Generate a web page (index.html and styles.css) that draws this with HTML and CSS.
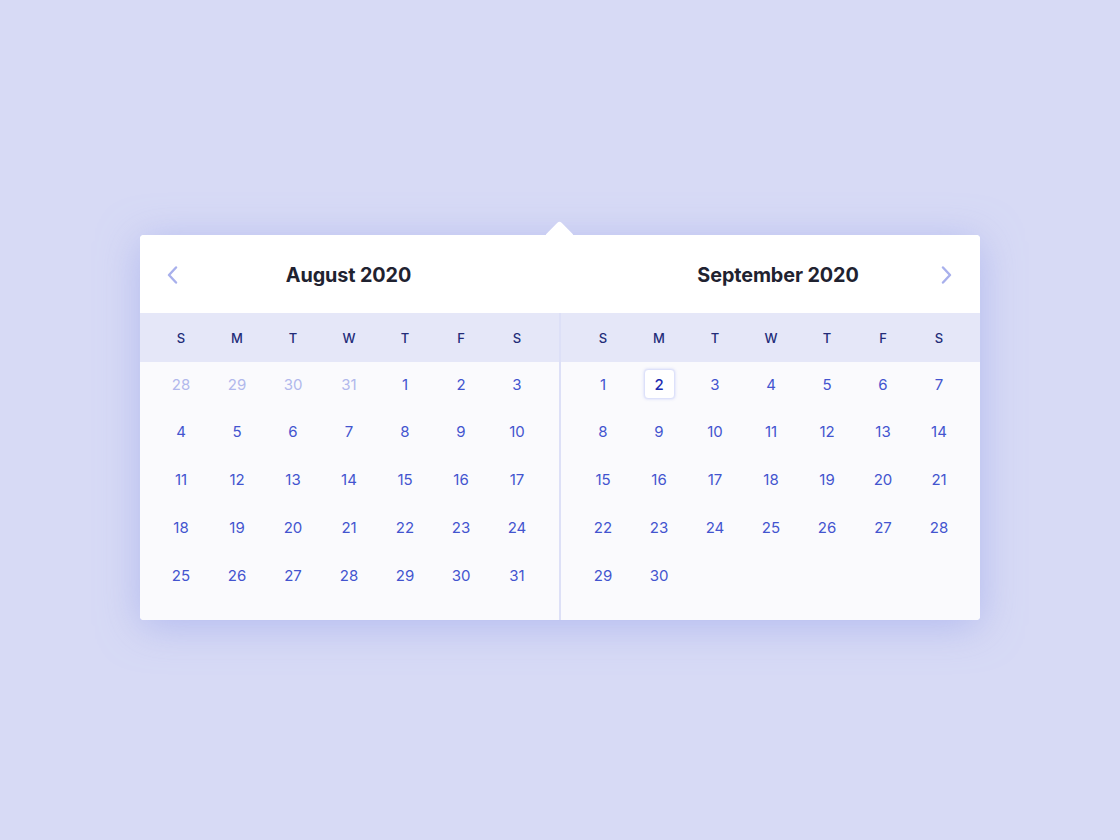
FILE: index.html
```
<!DOCTYPE html>
<html lang="en">
<head>
    <meta charset="UTF-8">
    <title>Date Range Picker</title>
    <link rel="stylesheet" href="styles.css">
</head>
<body>

<div class="picker">
    <div class="months">
        <section class="month month-left">
            <header class="month-head">
                <button class="nav" type="button" aria-label="Previous month">
                    <svg width="12" height="18" viewBox="0 0 12 18"><path d="M10 1.5 L3 9 L10 16.5" fill="none" stroke="currentColor" stroke-width="2.4" stroke-linecap="round" stroke-linejoin="round"/></svg>
                </button>
                <h2 class="month-title">August 2020</h2>
                <span class="spacer"></span>
            </header>
            <div class="weekdays">
                <span>S</span><span>M</span><span>T</span><span>W</span><span>T</span><span>F</span><span>S</span>
            </div>
            <div class="days">
                <span class="muted">28</span><span class="muted">29</span><span class="muted">30</span><span class="muted">31</span><span>1</span><span>2</span><span>3</span>
                <span>4</span><span>5</span><span>6</span><span>7</span><span>8</span><span>9</span><span>10</span>
                <span>11</span><span>12</span><span>13</span><span>14</span><span>15</span><span>16</span><span>17</span>
                <span>18</span><span>19</span><span>20</span><span>21</span><span>22</span><span>23</span><span>24</span>
                <span>25</span><span>26</span><span>27</span><span>28</span><span>29</span><span>30</span><span>31</span>
            </div>
        </section>

        <section class="month month-right">
            <header class="month-head">
                <span class="spacer"></span>
                <h2 class="month-title">September 2020</h2>
                <button class="nav" type="button" aria-label="Next month">
                    <svg width="12" height="18" viewBox="0 0 12 18"><path d="M2 1.5 L9 9 L2 16.5" fill="none" stroke="currentColor" stroke-width="2.4" stroke-linecap="round" stroke-linejoin="round"/></svg>
                </button>
            </header>
            <div class="weekdays">
                <span>S</span><span>M</span><span>T</span><span>W</span><span>T</span><span>F</span><span>S</span>
            </div>
            <div class="days">
                <span>1</span><span class="today">2</span><span>3</span><span>4</span><span>5</span><span>6</span><span>7</span>
                <span>8</span><span>9</span><span>10</span><span>11</span><span>12</span><span>13</span><span>14</span>
                <span>15</span><span>16</span><span>17</span><span>18</span><span>19</span><span>20</span><span>21</span>
                <span>22</span><span>23</span><span>24</span><span>25</span><span>26</span><span>27</span><span>28</span>
                <span>29</span><span>30</span>
            </div>
        </section>
    </div>
</div>

</body>
</html>
```

FILE: styles.css
```
* {
    margin: 0;
    padding: 0;
    box-sizing: border-box;
}

body {
    font-family: 'Inter', 'Liberation Sans', sans-serif;
    background-color: #d7daf5;
    display: flex;
    justify-content: center;
    align-items: flex-start;
    padding-top: 235px;
    min-height: 100vh;
}

.picker {
    position: relative;
    width: 840px;
    border-radius: 4px;
    background-color: #fff;
    box-shadow: 0 6px 40px rgba(150, 160, 235, 0.55);
}

/* little pointer on top of the popover */
.picker::before {
    content: '';
    position: absolute;
    top: -10px;
    left: 409px;
    width: 21px;
    height: 21px;
    background-color: #fff;
    border-radius: 3px;
    transform: rotate(45deg);
}

.months {
    position: relative;
    display: grid;
    grid-template-columns: 419px 421px;
    border-radius: 4px;
    overflow: hidden;
}

.month-head {
    height: 78px;
    display: flex;
    align-items: center;
    padding-top: 1px;
    background-color: #fff;
}

.month-left .month-head {
    padding-left: 22px;
}

.month-left .spacer {
    width: 44px;
}

.month-right .month-head {
    padding-right: 23px;
}

.month-right .spacer {
    width: 60px;
}

.month-title {
    flex: 1;
    text-align: center;
    font-size: 19.8px;
    font-weight: 700;
    color: #1f2230;
    letter-spacing: -0.1px;
}

.nav {
    width: 20px;
    height: 20px;
    display: flex;
    align-items: center;
    justify-content: center;
    border: none;
    background: none;
    color: #a8b0ec;
    cursor: pointer;
}

.weekdays,
.days {
    display: grid;
    grid-template-columns: repeat(7, 56px);
    padding: 0 13px;
}

.month-right .weekdays,
.month-right .days {
    border-left: 2px solid #dde0f7;
    padding-left: 14px;
}

.weekdays {
    height: 49px;
    align-items: center;
    background-color: #e5e7f8;
    font-size: 13px;
    font-weight: 500;
    color: #232c78;
}

.weekdays span {
    text-align: center;
}

.days {
    grid-auto-rows: 42px;
    row-gap: 5.75px;
    padding-top: 1px;
    padding-bottom: 24px;
    background-color: #fafafd;
    font-size: 15px;
    color: #4354cf;
}

.days span {
    display: flex;
    align-items: center;
    justify-content: center;
}

.days .muted {
    color: #b1b8ec;
}

.days .today {
    width: 31px;
    height: 30px;
    margin: auto;
    border: 1px solid #dde1fa;
    border-radius: 4px;
    background-color: #fff;
    box-shadow: 0 0 3px rgba(110, 125, 235, 0.3);
    color: #1b2bb0;
    font-weight: 500;
}
```
